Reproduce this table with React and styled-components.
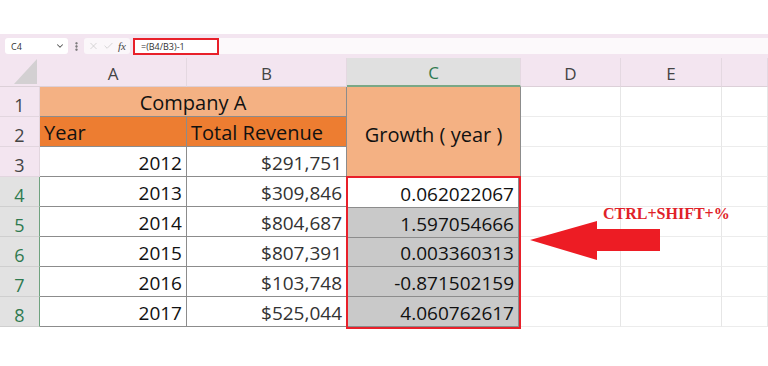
import React from 'react';
import styled, { createGlobalStyle } from 'styled-components';
import { ChevronDown, EllipsisVertical, X, Check } from 'lucide-react';

const PINK = '#f3e5f0';
const RED = '#e8202a';
const GREEN = '#2f7a4f';

const GlobalStyle = createGlobalStyle`
  html, body {
    margin: 0;
    background: #ffffff;
    font-family: "Open Sans", "Liberation Sans", sans-serif;
  }
`;

const Page = styled.div`
  width: 768px;
  height: 366px;
  padding-top: 34px;
  box-sizing: border-box;
  overflow: hidden;
`;

const FormulaBar = styled.div`
  display: flex;
  align-items: center;
  height: 24px;
  padding: 4px 0 4px 5px;
  box-sizing: border-box;
  background: ${PINK};
`;

const NameBox = styled.div`
  display: flex;
  align-items: center;
  justify-content: space-between;
  width: 63px;
  height: 16px;
  padding: 0 3px 0 6px;
  box-sizing: border-box;
  background: #fff;
  border-radius: 3px;
  font-size: 9px;
  color: #333;
`;

const Dots = styled.div`
  display: flex;
  justify-content: center;
  width: 16px;
  color: #666;
`;

const FnBox = styled.div`
  display: flex;
  align-items: center;
  gap: 4px;
  width: 46px;
  height: 16px;
  padding: 0 4px;
  box-sizing: border-box;
  background: #fbf7fa;
  border-radius: 3px;
  color: #c4c4c4;
`;

const Fx = styled.span`
  font-family: "Liberation Serif", serif;
  font-style: italic;
  font-size: 11px;
  color: #444;
`;

const FormulaInput = styled.div`
  flex: 1;
  height: 16px;
  margin-left: 3px;
  background: #fcf9fb;
`;

const Highlight = styled.div`
  display: flex;
  align-items: center;
  width: 86px;
  height: 17px;
  padding-left: 6px;
  box-sizing: border-box;
  border: 2px solid ${RED};
  font-size: 9px;
  color: #333;
  background: #fff;
`;

const Sheet = styled.div`
  position: relative;
  display: grid;
  grid-template-columns: 40px 147px 160px 174px 100px 101px 1fr;
  grid-template-rows: 29px repeat(8, 30px);
`;

const Corner = styled.div`
  display: flex;
  justify-content: flex-end;
  align-items: flex-end;
  padding: 0 3px 2px 0;
  background: ${PINK};
  border-bottom: 1px solid #dcd0d8;
`;

const Triangle = styled.div`
  width: 23px;
  height: 25px;
  background: #d3d0d2;
  clip-path: polygon(100% 0, 100% 100%, 0 100%);
`;

const ColHeader = styled.div`
  display: flex;
  align-items: center;
  justify-content: center;
  padding-top: 2px;
  box-sizing: border-box;
  font-size: 17px;
  color: ${(p) => (p.$active ? GREEN : '#444')};
  background: ${(p) => (p.$active ? '#e0e0e0' : PINK)};
  border-right: 1px solid #e4d8e1;
  border-bottom: ${(p) => (p.$active ? `2px solid #7aa886` : '1px solid #dcd0d8')};
`;

const RowHeader = styled.div`
  display: flex;
  align-items: center;
  justify-content: center;
  padding-top: 6px;
  box-sizing: border-box;
  font-size: 18px;
  color: ${(p) => (p.$active ? GREEN : '#444')};
  background: ${(p) => (p.$active ? '#e2e2e2' : PINK)};
  border-bottom: 1px solid ${(p) => (p.$active ? '#cfcfcf' : '#e2d6df')};
  border-right: 1px solid ${(p) => (p.$active ? '#6fa27f' : '#e2d6df')};
`;

const fills = {
  title: '#f4b183',
  head: '#ed7d31',
  plain: '#ffffff',
  picked: '#c9c9c9',
};

const Cell = styled.div`
  grid-column: span ${(p) => p.$span || 1};
  grid-row: span ${(p) => p.$rows || 1};
  display: flex;
  align-items: ${(p) => (p.$middle ? 'center' : 'flex-end')};
  justify-content: ${(p) =>
    p.$align === 'left' ? 'flex-start' : p.$align === 'center' ? 'center' : 'flex-end'};
  padding: ${(p) => (p.$middle ? '6px 4px 0 4px' : '0 4px 0 4px')};
  box-sizing: border-box;
  font-size: ${(p) => (p.$label ? '20px' : '19px')};
  line-height: 26px;
  color: ${(p) => p.$ink || '#111'};
  background: ${(p) => fills[p.$fill || 'plain']};
  border-right: 1px solid #8c8c8c;
  border-bottom: 1px solid #8c8c8c;
  white-space: nowrap;
`;

const Empty = styled.div`
  border-right: 1px solid #e6e6e6;
  border-bottom: 1px solid #ececec;
`;

const Selection = styled.div`
  grid-row: span 5;
  display: grid;
  grid-template-rows: repeat(5, 1fr);
  margin: -1px 0 -2px -1px;
  border: 2px solid ${RED};
  position: relative;
  z-index: 1;
`;

const Arrow = styled.svg`
  position: absolute;
  left: 528px;
  top: 160px;
`;

const Shortcut = styled.div`
  position: absolute;
  left: 603px;
  top: 148px;
  font-family: "Liberation Serif", serif;
  font-weight: bold;
  font-size: 16px;
  line-height: 16px;
  color: #e02128;
`;

const rows = [
  { n: 4, year: 2013, rev: '$309,846', growth: '0.062022067' },
  { n: 5, year: 2014, rev: '$804,687', growth: '1.597054666' },
  { n: 6, year: 2015, rev: '$807,391', growth: '0.003360313' },
  { n: 7, year: 2016, rev: '$103,748', growth: '-0.871502159' },
  { n: 8, year: 2017, rev: '$525,044', growth: '4.060762617' },
];

const Blanks = () => (
  <>
    <Empty />
    <Empty />
    <Empty />
  </>
);

const App = () => {
  return (
    <Page>
      <GlobalStyle />
      <FormulaBar>
        <NameBox>
          C4
          <ChevronDown size={10} strokeWidth={2.5} color="#555" />
        </NameBox>
        <Dots>
          <EllipsisVertical size={11} strokeWidth={3} />
        </Dots>
        <FnBox>
          <X size={12} strokeWidth={1.5} />
          <Check size={12} strokeWidth={1.5} />
          <Fx>fx</Fx>
        </FnBox>
        <FormulaInput>
          <Highlight>=(B4/B3)-1</Highlight>
        </FormulaInput>
      </FormulaBar>

      <Sheet>
        <Corner>
          <Triangle />
        </Corner>
        <ColHeader>A</ColHeader>
        <ColHeader>B</ColHeader>
        <ColHeader $active>C</ColHeader>
        <ColHeader>D</ColHeader>
        <ColHeader>E</ColHeader>
        <ColHeader />

        <RowHeader>1</RowHeader>
        <Cell $span={2} $fill="title" $align="center" $label>Company A</Cell>
        <Cell $rows={3} $fill="title" $align="center" $middle $label>Growth ( year )</Cell>
        <Blanks />

        <RowHeader>2</RowHeader>
        <Cell $fill="head" $align="left" $label>Year</Cell>
        <Cell $fill="head" $align="left" $label>Total Revenue</Cell>
        <Blanks />

        <RowHeader>3</RowHeader>
        <Cell>2012</Cell>
        <Cell $ink="#333">$291,751</Cell>
        <Blanks />

        {rows.map((r, i) => (
          <React.Fragment key={r.n}>
            <RowHeader $active>{r.n}</RowHeader>
            <Cell>{r.year}</Cell>
            <Cell $ink="#333">{r.rev}</Cell>
            {i === 0 && (
              <Selection>
                {rows.map((g, j) => (
                  <Cell key={g.n} $fill={j === 0 ? 'plain' : 'picked'}>
                    {g.growth}
                  </Cell>
                ))}
              </Selection>
            )}
            <Blanks />
          </React.Fragment>
        ))}

        <Shortcut>CTRL+SHIFT+%</Shortcut>
        <Arrow width="134" height="44" viewBox="0 0 134 44">
          <polygon
            points="2,22 69,3 69,11 132,11 132,33 69,33 69,42"
            fill="#ed1c24"
          />
        </Arrow>
      </Sheet>
    </Page>
  );
};

export default App;
